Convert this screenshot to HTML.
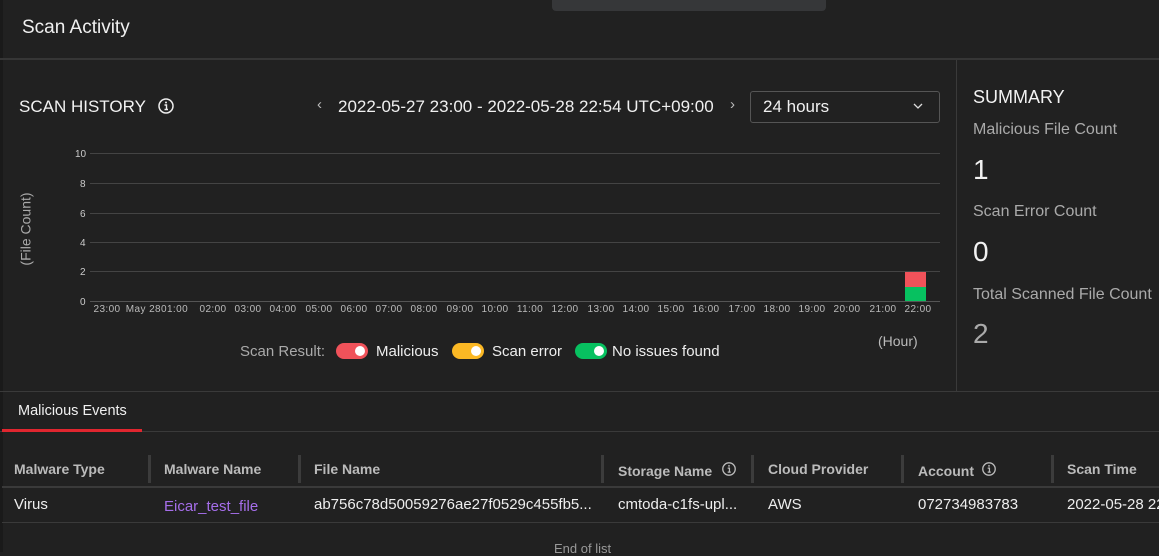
<!DOCTYPE html>
<html><head><meta charset="utf-8"><style>
*{margin:0;padding:0;box-sizing:border-box}
body{width:1159px;height:552px;background:#212121;font-family:"Liberation Sans",sans-serif;color:#eee;position:relative;overflow:hidden}
.a{position:absolute;white-space:nowrap}
.hl{position:absolute;height:1px;background:#3a3a3a}
.vl{position:absolute;width:1px;background:#3a3a3a}
.tog{position:absolute;width:32px;height:16px;border-radius:8px}
.tog::after{content:"";position:absolute;right:3px;top:3px;width:10px;height:10px;border-radius:5px;background:#fff}
.ax{font-size:10px;color:#ccc;position:absolute;white-space:nowrap}
.xl{position:absolute;top:304px;width:40px;text-align:center;font-size:10px;letter-spacing:0.4px;color:#bbb;white-space:nowrap}
.th{font-size:14px;color:#bbb;font-weight:bold;position:absolute;top:461px;white-space:nowrap}
.sep{position:absolute;top:455px;width:3px;height:28px;background:#3c3c3c}
.td{font-size:15px;color:#eee;position:absolute;top:496px;white-space:nowrap}
</style></head><body>
<div class="a" style="left:0;top:0;width:3px;height:552px;background:#1a1a1a"></div>
<div class="a" style="left:552px;top:0;width:274px;height:11px;background:#363739;border-radius:0 0 4px 4px"></div>
<div class="a" style="left:22px;top:17px;font-size:19px;color:#f0f0f0">Scan Activity</div>
<div class="hl" style="left:0;top:58px;width:1159px;height:2px;background:#363636"></div>
<div class="a" style="left:19px;top:97px;font-size:17px;color:#f2f2f2">SCAN HISTORY</div>
<svg class="a" style="left:157px;top:97px" width="18" height="18" viewBox="0 0 18 18"><circle cx="9" cy="9" r="7" fill="none" stroke="#eee" stroke-width="1.5"/><circle cx="9" cy="5.5" r="1" fill="#eee"/><path d="M7.5 8h2v4.5M7.5 12.5h3.5" stroke="#eee" stroke-width="1.4" fill="none"/></svg>
<div class="a" style="left:317px;top:96px;font-size:15px;color:#bbb">‹</div>
<div class="a" style="left:338px;top:97px;font-size:17px;color:#f0f0f0">2022-05-27 23:00 - 2022-05-28 22:54 UTC+09:00</div>
<div class="a" style="left:730px;top:96px;font-size:15px;color:#bbb">›</div>
<div class="a" style="left:750px;top:91px;width:190px;height:32px;border:1px solid #555;border-radius:3px"></div>
<div class="a" style="left:763px;top:97px;font-size:17px;color:#f0f0f0">24 hours</div>
<svg class="a" style="left:913px;top:102px" width="10" height="8"><path d="M1 2l4 4 4-4" stroke="#ddd" stroke-width="1.3" fill="none"/></svg>
<!-- chart -->
<div class="hl" style="left:90px;top:153px;width:850px;background:#444"></div>
<div class="hl" style="left:90px;top:183px;width:850px;background:#444"></div>
<div class="hl" style="left:90px;top:213px;width:850px;background:#444"></div>
<div class="hl" style="left:90px;top:242px;width:850px;background:#444"></div>
<div class="hl" style="left:90px;top:271px;width:850px;background:#444"></div>
<div class="hl" style="left:90px;top:301px;width:850px;background:#555"></div>
<div class="ax" style="left:75px;top:149px">10</div>
<div class="ax" style="left:80px;top:179px">8</div>
<div class="ax" style="left:80px;top:209px">6</div>
<div class="ax" style="left:80px;top:238px">4</div>
<div class="ax" style="left:80px;top:267px">2</div>
<div class="ax" style="left:80px;top:297px">0</div>
<div class="a" style="left:-11px;top:221px;font-size:14px;color:#aaa;transform:rotate(-90deg)">(File Count)</div>
<div class="a" style="left:905px;top:272px;width:21px;height:15px;background:#f0525a"></div>
<div class="a" style="left:905px;top:287px;width:21px;height:14px;background:#07c160"></div>
<div class="xl" style="left:87px">23:00</div>
<div class="xl" style="left:125px;text-align:right;width:36px">May 28</div>
<div class="xl" style="left:161px;text-align:left">01:00</div>
<div class="xl" style="left:193px">02:00</div>
<div class="xl" style="left:228px">03:00</div>
<div class="xl" style="left:263px">04:00</div>
<div class="xl" style="left:299px">05:00</div>
<div class="xl" style="left:334px">06:00</div>
<div class="xl" style="left:369px">07:00</div>
<div class="xl" style="left:404px">08:00</div>
<div class="xl" style="left:440px">09:00</div>
<div class="xl" style="left:475px">10:00</div>
<div class="xl" style="left:510px">11:00</div>
<div class="xl" style="left:545px">12:00</div>
<div class="xl" style="left:581px">13:00</div>
<div class="xl" style="left:616px">14:00</div>
<div class="xl" style="left:651px">15:00</div>
<div class="xl" style="left:686px">16:00</div>
<div class="xl" style="left:722px">17:00</div>
<div class="xl" style="left:757px">18:00</div>
<div class="xl" style="left:792px">19:00</div>
<div class="xl" style="left:827px">20:00</div>
<div class="xl" style="left:863px">21:00</div>
<div class="xl" style="left:898px">22:00</div>
<div class="a" style="left:240px;top:343px;font-size:15px;color:#aaa">Scan Result:</div>
<div class="tog" style="left:336px;top:343px;background:#f0525a"></div>
<div class="a" style="left:376px;top:343px;font-size:15px">Malicious</div>
<div class="tog" style="left:452px;top:343px;background:#fbb824"></div>
<div class="a" style="left:492px;top:343px;font-size:15px">Scan error</div>
<div class="tog" style="left:575px;top:343px;background:#07c160"></div>
<div class="a" style="left:612px;top:343px;font-size:15px">No issues found</div>
<div class="a" style="left:878px;top:333px;font-size:14px;color:#bbb">(Hour)</div>
<!-- summary -->
<div class="vl" style="left:956px;top:60px;height:331px"></div>
<div class="a" style="left:973px;top:87px;font-size:18px;color:#f2f2f2">SUMMARY</div>
<div class="a" style="left:973px;top:121px;font-size:16px;color:#aaa">Malicious File Count</div>
<div class="a" style="left:973px;top:154px;font-size:28px;color:#f2f2f2">1</div>
<div class="a" style="left:973px;top:203px;font-size:16px;color:#aaa">Scan Error Count</div>
<div class="a" style="left:973px;top:236px;font-size:28px;color:#f2f2f2">0</div>
<div class="a" style="left:973px;top:286px;font-size:16px;color:#aaa">Total Scanned File Count</div>
<div class="a" style="left:973px;top:318px;font-size:28px;color:#aaa">2</div>
<div class="hl" style="left:0;top:391px;width:1159px"></div>
<!-- tabs -->
<div class="a" style="left:18px;top:403px;font-size:14.5px;color:#f0f0f0">Malicious Events</div>
<div class="hl" style="left:0;top:431px;width:1159px"></div>
<div class="a" style="left:2px;top:429px;width:140px;height:3px;background:#e0262f"></div>
<!-- table -->
<div class="th" style="left:14px">Malware Type</div>
<div class="sep" style="left:148px"></div>
<div class="th" style="left:164px">Malware Name</div>
<div class="sep" style="left:298px"></div>
<div class="th" style="left:314px">File Name</div>
<div class="sep" style="left:601px"></div>
<div class="th" style="left:618px;top:463px">Storage Name</div>
<svg class="a" style="left:721px;top:461px" width="16" height="16" viewBox="0 0 18 18"><circle cx="9" cy="9" r="7" fill="none" stroke="#bbb" stroke-width="1.5"/><circle cx="9" cy="5.5" r="1" fill="#bbb"/><path d="M7.5 8h2v4.5M7.5 12.5h3.5" stroke="#bbb" stroke-width="1.4" fill="none"/></svg>
<div class="sep" style="left:751px"></div>
<div class="th" style="left:768px">Cloud Provider</div>
<div class="sep" style="left:901px"></div>
<div class="th" style="left:918px;top:463px">Account</div>
<svg class="a" style="left:981px;top:461px" width="16" height="16" viewBox="0 0 18 18"><circle cx="9" cy="9" r="7" fill="none" stroke="#bbb" stroke-width="1.5"/><circle cx="9" cy="5.5" r="1" fill="#bbb"/><path d="M7.5 8h2v4.5M7.5 12.5h3.5" stroke="#bbb" stroke-width="1.4" fill="none"/></svg>
<div class="sep" style="left:1051px"></div>
<div class="th" style="left:1067px">Scan Time</div>
<div class="hl" style="left:2px;top:486px;width:1157px;height:2px;background:#3a3a3a"></div>
<div class="td" style="left:14px">Virus</div>
<div class="td" style="left:164px;top:498px;color:#a56eea">Eicar_test_file</div>
<div class="td" style="left:314px">ab756c78d50059276ae27f0529c455fb5...</div>
<div class="td" style="left:618px">cmtoda-c1fs-upl...</div>
<div class="td" style="left:768px">AWS</div>
<div class="td" style="left:918px">072734983783</div>
<div class="td" style="left:1067px">2022-05-28 22:54</div>
<div class="hl" style="left:2px;top:522px;width:1157px"></div>
<div class="a" style="left:554px;top:541px;font-size:13px;color:#999">End of list</div>
</body></html>
